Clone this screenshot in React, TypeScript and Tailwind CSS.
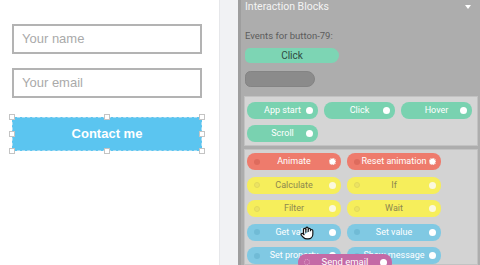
import { Hand } from 'lucide-react'

type PillProps = {
  label: string
  bg: string
  text: string
  w: string
  left?: string
  right?: string
}

function Pill({ label, bg, text, w, left, right }: PillProps) {
  return (
    <div
      className={`relative flex h-[17px] ${w} items-center justify-center rounded-[8px] ${bg} ${text} text-[9px] leading-none`}
    >
      {left && (
        <span className={`absolute left-[7px] top-[5.5px] h-[6px] w-[6px] rounded-full ${left}`} />
      )}
      <span>{label}</span>
      {right && (
        <span className={`absolute right-[5px] top-[5px] h-[7px] w-[7px] rounded-full ${right}`} />
      )}
    </div>
  )
}

const greens = ['App start', 'Click', 'Hover', 'Scroll']

export default function App() {
  return (
    <div className="flex h-[265px] w-[480px] overflow-hidden bg-white font-['Liberation_Sans',sans-serif]">
      {/* canvas */}
      <div className="flex w-[219px] flex-col pl-[12px] pt-[24px]">
        <div className="flex h-[30px] w-[190px] items-center border-2 border-[#b3b3b3] pl-[8px] text-[13px] text-[#aaaaaa]">
          Your name
        </div>
        <div className="mt-[14px] flex h-[30px] w-[190px] items-center border-2 border-[#b3b3b3] pl-[8px] text-[13px] text-[#aaaaaa]">
          Your email
        </div>
        <div className="relative mt-[19px] h-[34px] w-[190px]">
          <div className="flex h-full w-full items-center justify-center border border-dashed border-[#a9dcf3] bg-[#5bc5f0] text-[13px] font-bold text-white">
            Contact me
          </div>
          <span className="absolute -left-[3px] -top-[3px] h-[6px] w-[6px] border border-[#c4c4c4] bg-white" />
          <span className="absolute left-[92px] -top-[3px] h-[6px] w-[6px] border border-[#c4c4c4] bg-white" />
          <span className="absolute -right-[3px] -top-[3px] h-[6px] w-[6px] border border-[#c4c4c4] bg-white" />
          <span className="absolute -left-[3px] top-[14px] h-[6px] w-[6px] border border-[#c4c4c4] bg-white" />
          <span className="absolute -right-[3px] top-[14px] h-[6px] w-[6px] border border-[#c4c4c4] bg-white" />
          <span className="absolute -bottom-[3px] -left-[3px] h-[6px] w-[6px] border border-[#c4c4c4] bg-white" />
          <span className="absolute -bottom-[3px] left-[92px] h-[6px] w-[6px] border border-[#c4c4c4] bg-white" />
          <span className="absolute -bottom-[3px] -right-[3px] h-[6px] w-[6px] border border-[#c4c4c4] bg-white" />
        </div>
      </div>

      <div className="w-[19px] border-l border-[#e6e7ea] bg-[#f1f2f4]" />
      <div className="w-[3px] bg-[#9e9e9e]" />

      {/* sidebar */}
      <div className="relative flex flex-1 flex-col bg-[#adadad] font-['Roboto',sans-serif]">
        <div className="flex h-[15px] items-start justify-between pl-[4px] pr-[9px] pt-[1px]">
          <span className="text-[10.5px] leading-[12px] text-[#f4f4f4]">Interaction Blocks</span>
          <span className="mt-[4px] h-0 w-0 border-x-[3px] border-t-[4px] border-x-transparent border-t-white" />
        </div>

        <div className="mt-[16px] pl-[4px] text-[9.5px] leading-[12px] text-[#5c5c5c]">
          Events for button-79:
        </div>
        <div className="ml-[4px] mt-[6px] flex h-[17px] w-[94px] items-center justify-center rounded-l-[6px] rounded-r-[9px] bg-[#7dd5b4] text-[10px] text-[#2f4a40]">
          Click
        </div>
        <div className="ml-[4px] mt-[8px] h-[17px] w-[70px] rounded-l-[6px] rounded-r-[9px] border border-[#848484] bg-[#8b8b8b]" />

        <div className="ml-[3px] mr-[2px] mt-[9px] border border-[#c2c2c2] bg-[#d5d5d5] pb-[3px] pl-[2px] pt-[5px]">
          <div className="grid grid-cols-[71px_71px_71px] gap-x-[6px] gap-y-[6px]">
            {greens.map((g) => (
              <Pill key={g} label={g} w="w-[71px]" bg="bg-[#79d2b0]" text="text-white" right="bg-white" />
            ))}
          </div>
        </div>

        <div className="ml-[3px] mr-[2px] mt-[3px] flex-1 border border-[#c2c2c2] bg-[#d3d3d3] pl-[2px] pt-[3px]">
          <div className="grid grid-cols-[94px_94px] gap-x-[6px] gap-y-[6.5px]">
            <Pill label="Animate" w="w-[94px]" bg="bg-[#ee7b6c]" text="text-white" left="bg-[#de6b5d]" right="bg-white border border-dotted border-[#e7a69d]" />
            <Pill label="Reset animation" w="w-[94px]" bg="bg-[#ee7b6c]" text="text-white" left="bg-[#de6b5d]" right="bg-white border border-dotted border-[#e7a69d]" />
            <Pill label="Calculate" w="w-[94px]" bg="bg-[#f6ee5b]" text="text-[#8d874f]" left="bg-[#ece363] border border-[#e2d95a]" right="bg-[#fbf8dd]" />
            <Pill label="If" w="w-[94px]" bg="bg-[#f6ee5b]" text="text-[#8d874f]" left="bg-[#ece363] border border-[#e2d95a]" right="bg-[#fbf8dd]" />
            <Pill label="Filter" w="w-[94px]" bg="bg-[#f6ee5b]" text="text-[#8d874f]" left="bg-[#ece363] border border-[#e2d95a]" right="bg-[#fbf8dd]" />
            <Pill label="Wait" w="w-[94px]" bg="bg-[#f6ee5b]" text="text-[#8d874f]" left="bg-[#ece363] border border-[#e2d95a]" right="bg-[#fbf8dd]" />
            <Pill label="Get value" w="w-[94px]" bg="bg-[#80c9e3]" text="text-white" left="bg-[#70bbd6]" right="bg-white" />
            <Pill label="Set value" w="w-[94px]" bg="bg-[#80c9e3]" text="text-white" left="bg-[#70bbd6]" right="bg-white" />
            <Pill label="Set property" w="w-[94px]" bg="bg-[#80c9e3]" text="text-white" left="bg-[#70bbd6]" right="bg-white" />
            <Pill label="Show message" w="w-[94px]" bg="bg-[#80c9e3]" text="text-white" left="bg-[#70bbd6]" right="bg-white" />
          </div>
        </div>

        {/* dragged block */}
        <div className="absolute left-[57px] top-[254px] flex h-[17px] w-[94px] items-center justify-center rounded-[8px] bg-[#c46aa6] text-[9.5px] text-white">
          <span className="absolute left-[6px] top-[5px] h-[6px] w-[6px] rounded-full border border-dotted border-[#e0a6cc]" />
          Send email
          <span className="absolute right-[5px] top-[5px] h-[7px] w-[7px] rounded-full bg-white" />
        </div>

        {/* cursor */}
        <Hand
          className="absolute left-[59px] top-[226px]"
          size={14}
          strokeWidth={2}
          color="#111"
          fill="white"
        />
      </div>
    </div>
  )
}
